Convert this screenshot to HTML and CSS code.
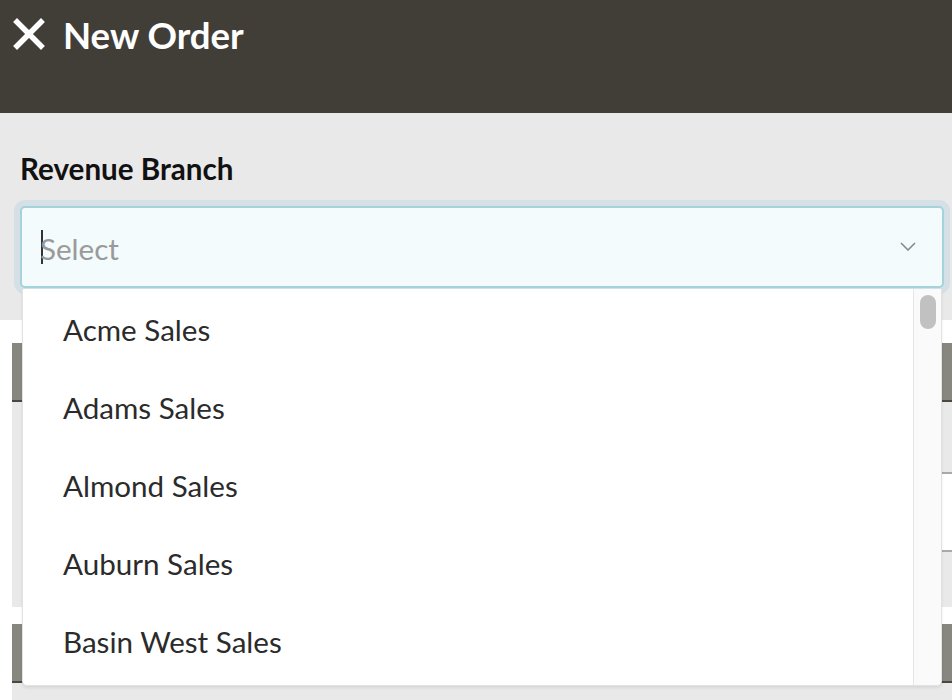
FILE: index.html
```html
<!DOCTYPE html>
<html>
<head>
<meta charset="utf-8">
<link rel="stylesheet" href="styles.css">
</head>
<body>
<header class="topbar">
  <svg class="close-icon" viewBox="0 0 32 32" width="32" height="32"><path d="M4 4 L28 28 M28 4 L4 28" stroke="#fff" stroke-width="5.5" stroke-linecap="square" fill="none"/></svg>
  <h1 class="title">New Order</h1>
</header>
<section class="form-panel">
  <label class="field-label">Revenue Branch</label>
  <div class="select-wrap">
    <div class="select-box">
      <span class="caret"></span><span class="placeholder">Select</span>
      <svg class="chevron" viewBox="0 0 16 9" width="16" height="9"><path d="M1 1 L8 8 L15 1" stroke="#8a8a8a" stroke-width="1.6" fill="none"/></svg>
    </div>
    <div class="dropdown">
      <ul class="options">
        <li class="option">Acme Sales</li>
        <li class="option">Adams Sales</li>
        <li class="option">Almond Sales</li>
        <li class="option">Auburn Sales</li>
        <li class="option">Basin West Sales</li>
      </ul>
      <div class="scrolltrack"><div class="thumb"></div></div>
    </div>
  </div>
</section>
<main class="content">
  <div class="card">
    <div class="card-head"></div>
    <div class="card-body">
      <div class="row gray"></div>
      <div class="row white"></div>
      <div class="row gray short"></div>
    </div>
  </div>
  <div class="card last">
    <div class="card-head"></div>
    <div class="card-body"><div class="row gray tiny"></div></div>
  </div>
</main>
</body>
</html>
```
FILE: styles.css
```css
html, body {
  margin: 0;
  padding: 0;
  background: #ffffff;
  font-family: Lato, "Noto Sans", sans-serif;
  overflow: hidden;
  height: 700px;
}
.topbar {
  height: 113px;
  box-sizing: border-box;
  background: #413e37;
  display: flex;
  align-items: flex-start;
  padding: 17px 0 0 13px;
}
.close-icon {
  display: block;
  margin-top: 1px;
}
.title {
  margin: 0 0 0 18px;
  color: #fff;
  font-size: 36.6px;
  font-weight: 700;
  line-height: 36px;
}
.form-panel {
  background: #e9e9e9;
  height: 207px;
  box-sizing: border-box;
  padding: 39px 8px 0 20px;
}
.field-label {
  display: block;
  font-size: 29.6px;
  font-weight: 700;
  color: #111;
  line-height: 34px;
  margin-left: 0;
}
.select-wrap {
  position: relative;
  margin-top: 20px;
}
.select-box {
  height: 82px;
  box-sizing: border-box;
  border: 2px solid #a6d3da;
  border-radius: 5px;
  background: #f3fbfd;
  box-shadow: 0 0 0 6px #d4e0e5;
  display: flex;
  align-items: center;
  padding-left: 19px;
  padding-right: 26px;
}
.caret {
  width: 2px;
  height: 34px;
  background: #333;
  margin-right: -3px;
}
.placeholder {
  font-size: 29.6px;
  color: #9a9a9a;
  flex: 1;
  margin-top: 2px;
}
.chevron { display: block; margin-bottom: 2px; }
.dropdown {
  position: absolute;
  left: 2px;
  right: 2px;
  top: 83px;
  height: 397px;
  box-sizing: border-box;
  background: #fff;
  border: 1px solid #e2e2e2;
  border-top: none;
  border-radius: 0 0 5px 5px;
  box-shadow: 0 2px 3px rgba(0,0,0,0.08);
  display: flex;
  overflow: hidden;
}
.options {
  list-style: none;
  margin: 0;
  padding: 1px 0 0 0;
  flex: 1;
}
.option {
  height: 78px;
  display: flex;
  align-items: center;
  padding-left: 40px;
  font-size: 29.6px;
  color: #2b2b2b;
}
.scrolltrack {
  width: 28px;
  background: #fafafa;
  border-left: 1px solid #e6e6e6;
  padding: 6px 5px 0 6px;
  box-sizing: border-box;
}
.thumb {
  height: 34px;
  width: 16px;
  background: #c1c1c1;
  border-radius: 8px;
}
.content {
  padding: 23px 0 0 12px;
}
.card {
  margin-bottom: 17px;
}
.card.last { margin-bottom: 0; }
.card-head {
  height: 57px;
  background: #878780;
  border-bottom: 2px solid #4b4841;
}
.card-body {
  background: #e9e9e9;
}
.row.gray { height: 70px; background: #e9e9e9; }
.row.white {
  height: 76px;
  background: #fff;
  border-top: 2px solid #a9a9a9;
  border-bottom: 2px solid #a9a9a9;
  margin-left: 920px;
}
.row.short { height: 55px; }
.row.tiny { height: 20px; }
```
